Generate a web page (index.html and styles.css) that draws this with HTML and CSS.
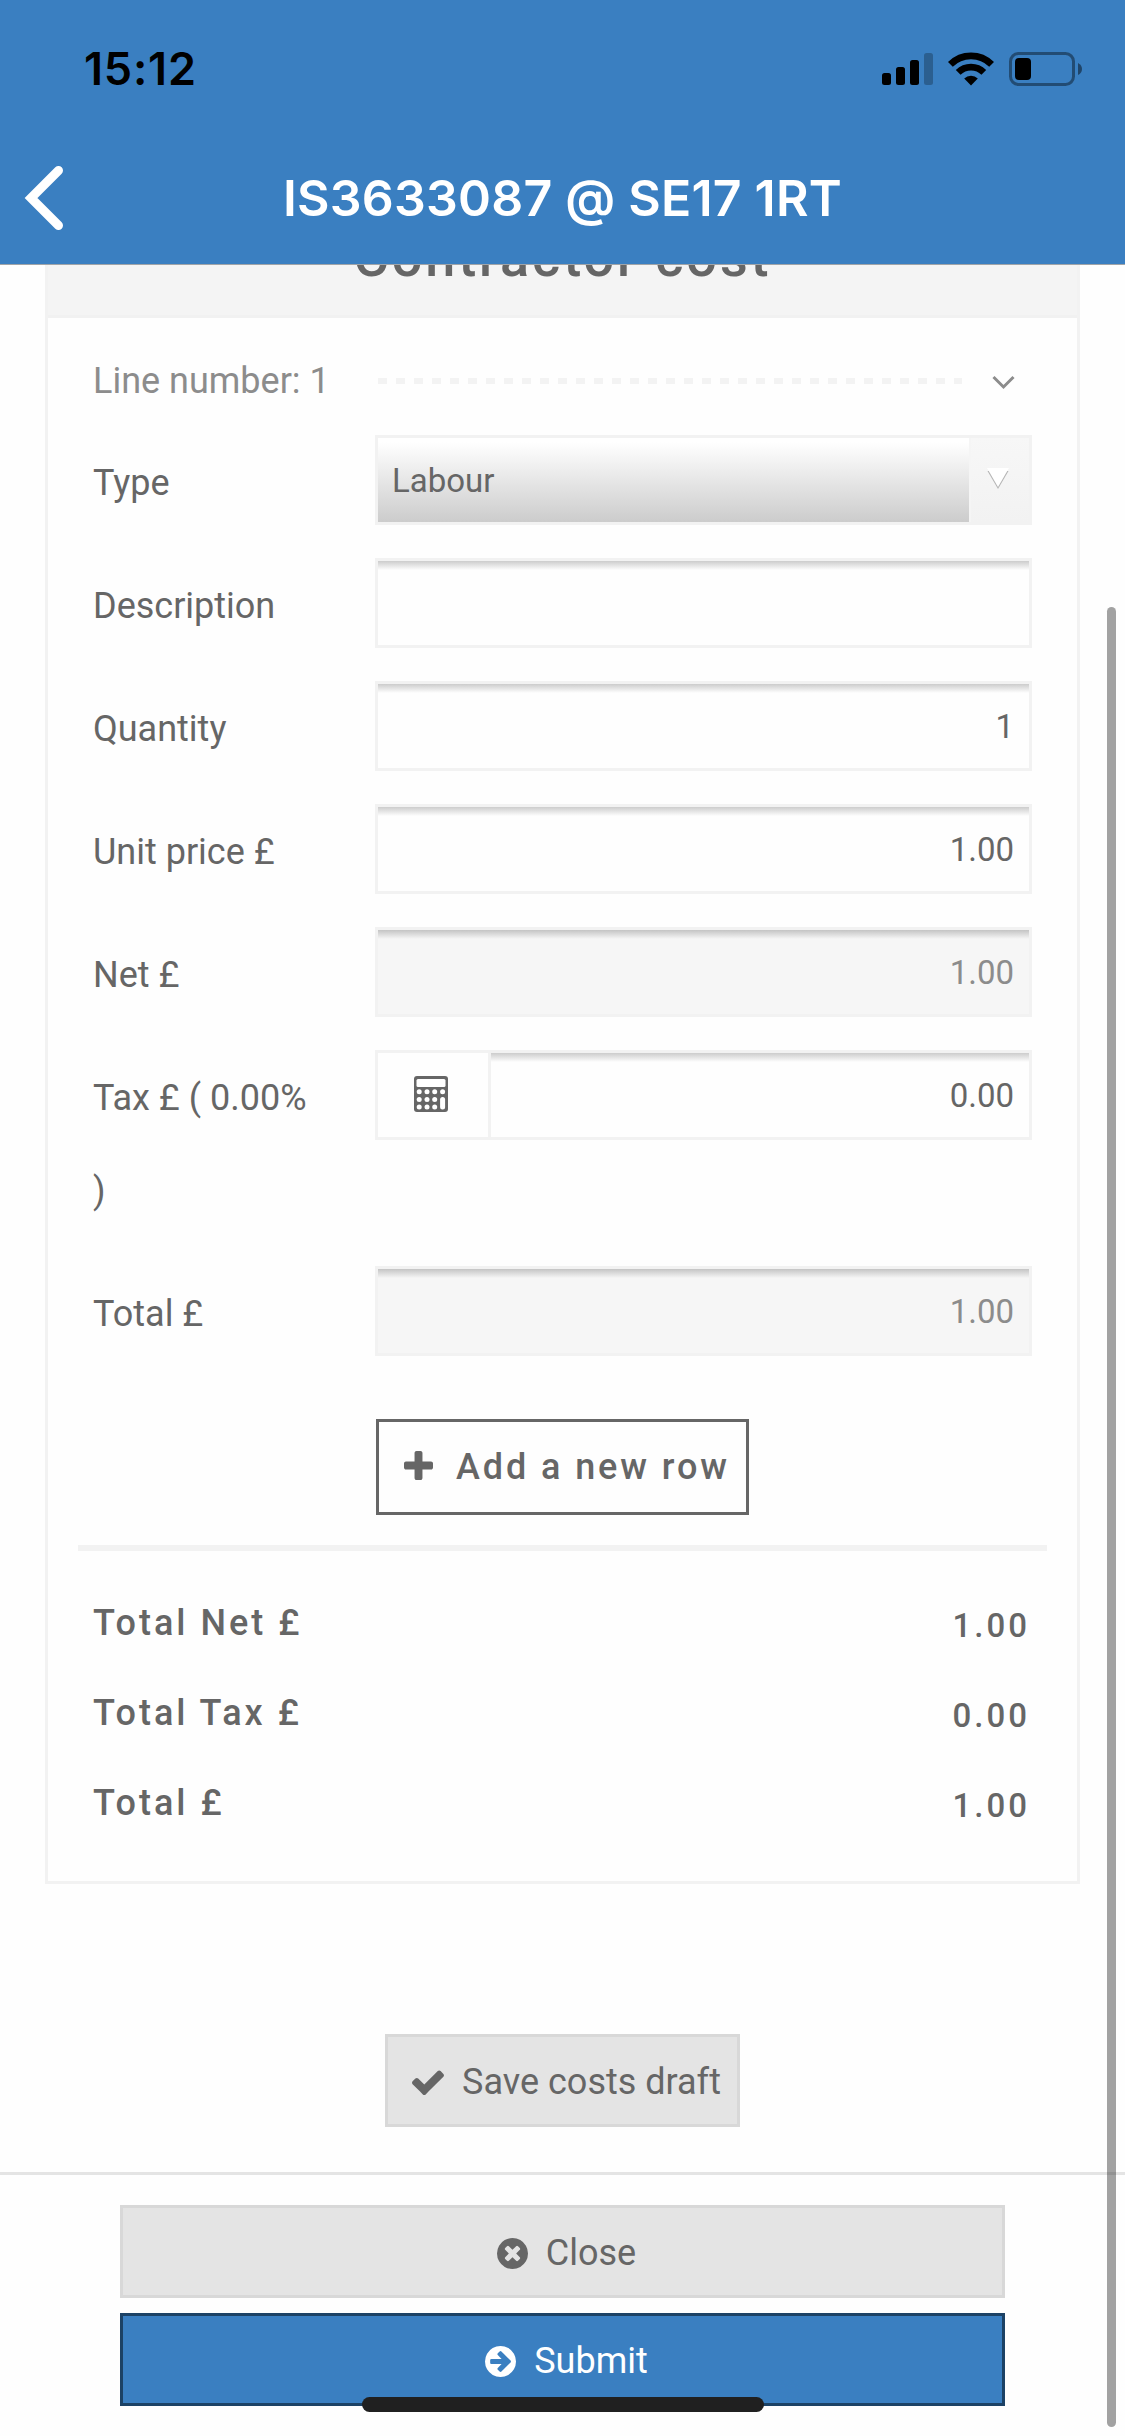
FILE: index.html
```html
<!DOCTYPE html>
<html lang="en">
<head>
    <meta charset="UTF-8">
    <meta name="viewport" content="width=device-width, initial-scale=1.0">
    <title>Contractor cost</title>
    <link rel="stylesheet" href="styles.css">
</head>
<body>

    <!-- Header -->
    <header class="header">
        <div class="status-bar">
            <span class="time">15:12</span>
            <svg class="status-icons" width="202" height="36" viewBox="0 0 202 36">
                <rect x="1" y="22" width="9" height="12" rx="2.5"/>
                <rect x="15" y="16" width="9" height="18" rx="2.5"/>
                <rect x="29" y="9" width="9" height="25" rx="2.5"/>
                <rect x="43" y="2" width="9" height="32" rx="2.5" opacity="0.25"/>
                <g fill="none" stroke="#000" stroke-width="6.8">
                    <path d="M69.4 13.3a29.2 29.2 0 0 1 41.2 0"/>
                    <path d="M77.2 21.4a18.2 18.2 0 0 1 25.6 0"/>
                </g>
                <path d="M83.2 27.6a9.8 9.8 0 0 1 13.6 0L90 34.4z"/>
                <rect x="129.5" y="2.500" width="63" height="31" rx="8" fill="none" stroke="#000" stroke-width="3" opacity="0.4"/>
                <rect x="134" y="7" width="16" height="22" rx="4"/>
                <path d="M197 12q4 2 4 6t-4 6z" opacity="0.45"/>
            </svg>
        </div>
        <div class="nav-bar">
            <svg class="back" width="45" height="66" viewBox="0 0 45 66">
                <path d="M36.500 5.500L9 33l27.500 27.500" fill="none" stroke="#fff" stroke-width="9" stroke-linecap="round"/>
            </svg>
            <h1>IS3633087 @ SE17 1RT</h1>
        </div>
    </header>

    <!-- Cost form -->
    <main class="content">
        <div class="card">
            <h2>Contractor cost</h2>
            <div class="card-body">
                <div class="line-number">
                    <span>Line number: 1</span>
                    <div class="dashes"></div>
                    <svg width="23" height="16" viewBox="0 0 23 16">
                        <path d="M1.500 2l10 10 10-10" fill="none" stroke="#8c8c8c" stroke-width="3"/>
                    </svg>
                </div>

                <div class="row">
                    <label>Type</label>
                    <div class="select">
                        <span class="value">Labour</span>
                        <span class="arrow">
                            <svg width="22" height="22" viewBox="0 0 22 22">
                                <path d="M0.500 3l10.500 18L21.500 3" fill="#b4b4b4"/>
                                <path d="M0 0h22L11 19z" fill="#fff"/>
                            </svg>
                        </span>
                    </div>
                </div>
                <div class="row">
                    <label>Description</label>
                    <div class="input"></div>
                </div>
                <div class="row">
                    <label>Quantity</label>
                    <div class="input">1</div>
                </div>
                <div class="row">
                    <label>Unit price £</label>
                    <div class="input">1.00</div>
                </div>
                <div class="row">
                    <label>Net £</label>
                    <div class="input disabled">1.00</div>
                </div>
                <div class="row">
                    <label>Tax £ ( 0.00% )</label>
                    <div class="input-group">
                        <div class="calc">
                            <svg width="34" height="36" viewBox="0 0 34 36">
                                <rect width="34" height="36" rx="3" fill="#666"/>
                                <g fill="#fff">
                                    <rect x="2.500" y="3" width="29" height="8" rx="1.500"/>
                                    <circle cx="5.200" cy="15.700" r="2.500"/>
                                    <circle cx="13" cy="15.700" r="2.500"/>
                                    <circle cx="20.700" cy="15.700" r="2.500"/>
                                    <circle cx="28.600" cy="15.700" r="2.500"/>
                                    <circle cx="5.200" cy="23.400" r="2.500"/>
                                    <circle cx="13" cy="23.400" r="2.500"/>
                                    <circle cx="20.700" cy="23.400" r="2.500"/>
                                    <circle cx="5.200" cy="31" r="2.500"/>
                                    <circle cx="13" cy="31" r="2.500"/>
                                    <circle cx="20.700" cy="31" r="2.500"/>
                                    <rect x="26.100" y="20.900" width="5" height="12.600" rx="2.500"/>
                                </g>
                            </svg>
                        </div>
                        <div class="input">0.00</div>
                    </div>
                </div>
                <div class="row">
                    <label>Total £</label>
                    <div class="input disabled">1.00</div>
                </div>

                <button class="add-row">
                    <svg width="29" height="29" viewBox="192 128 1408 1408"><path fill="currentColor" d="M1600 736v192q0 40-28 68t-68 28h-416v416q0 40-28 68t-68 28h-192q-40 0-68-28t-28-68v-416h-416q-40 0-68-28t-28-68v-192q0-40 28-68t68-28h416v-416q0-40 28-68t68-28h192q40 0 68 28t28 68v416h416q40 0 68 28t28 68z"/></svg>
                    Add a new row
                </button>

                <div class="divider"></div>

                <div class="total">
                    <span>Total Net £</span>
                    <span class="amount">1.00</span>
                </div>
                <div class="total">
                    <span>Total Tax £</span>
                    <span class="amount">0.00</span>
                </div>
                <div class="total">
                    <span>Total £</span>
                    <span class="amount">1.00</span>
                </div>
            </div>
        </div>

        <button class="btn save">
            <svg width="32" height="25" viewBox="121 310 1550 1212"><path fill="currentColor" d="M1671 566q0 40-28 68l-724 724-136 136q-28 28-68 28t-68-28l-136-136-362-362q-28-28-28-68t28-68l136-136q28-28 68-28t68 28l294 295 656-657q28-28 68-28t68 28l136 136q28 28 28 68z"/></svg>
            Save costs draft
        </button>
    </main>

    <!-- Footer buttons -->
    <footer class="footer">
        <button class="btn">
            <svg width="31" height="31" viewBox="128 128 1536 1536"><path fill="currentColor" d="M1277 1122q0-26-19-45l-181-181 181-181q19-19 19-45 0-27-19-46l-90-90q-19-19-46-19-26 0-45 19l-181 181-181-181q-19-19-45-19-27 0-46 19l-90 90q-19 19-19 46 0 26 19 45l181 181-181 181q-19 19-19 45 0 27 19 46l90 90q19 19 46 19 26 0 45-19l181-181 181 181q19 19 45 19 27 0 46-19l90-90q19-19 19-46zm387-226q0 209-103 385.500t-279.500 279.500-385.500 103-385.500-103-279.500-279.500-103-385.500 103-385.500 279.500-279.500 385.500-103 385.500 103 279.500 279.500 103 385.500z"/></svg>
            Close
        </button>
        <button class="btn submit">
            <svg width="31" height="31" viewBox="128 128 1536 1536"><path fill="currentColor" d="M1413 896q0-27-18-45l-91-91-362-362q-18-18-45-18t-45 18l-91 91q-18 18-18 45t18 45l189 189h-502q-26 0-45 19t-19 45v128q0 26 19 45t45 19h502l-189 189q-19 19-19 45t19 45l91 91q18 18 45 18t45-18l362-362 91-91q18-18 18-45zm251 0q0 209-103 385.500t-279.500 279.500-385.500 103-385.500-103-279.500-279.500-103-385.500 103-385.500 279.500-279.500 385.500-103 385.500 103 279.500 279.500 103 385.500z"/></svg>
            Submit
        </button>
    </footer>

    <div class="scrollbar"></div>
    <div class="home-indicator"></div>

</body>
</html>
```
FILE: styles.css
```css
* {
    box-sizing: border-box;
    margin: 0;
    padding: 0;
}
body {
    position: relative;
    width: 1125px;
    height: 2436px;
    overflow: hidden;
    background: #fefefe;
    font-family: Roboto, sans-serif;
    font-size: 36px;
    color: #666;
}
svg {
    display: block;
    flex: none;
}

/* Header */
.header {
    height: 265px;
    background: #3a7fc1;
    border-bottom: 1px solid #a0a4a8;
    font-family: Inter, sans-serif;
}
.status-bar {
    height: 132px;
    padding: 51px 42px 0 84px;
    display: flex;
    justify-content: space-between;
    align-items: flex-start;
}
.time {
    font-size: 45px;
    font-weight: 600;
    letter-spacing: 0.8px;
    line-height: 36px;
    color: #000;
}
.nav-bar {
    height: 132px;
    padding: 0 22px;
    display: grid;
    grid-template-columns: 45px 1fr 45px;
    align-items: center;
}
h1 {
    font-size: 50px;
    font-weight: 600;
    letter-spacing: 0.2px;
    line-height: 60px;
    color: #fff;
    text-align: center;
    white-space: nowrap;
}

/* Card */
.content {
    height: 1907px;
    padding: 0 45px;
    overflow: hidden;
}
.card {
    margin-top: -55px;
    border: 3px solid #f2f2f2;
}
h2 {
    height: 105px;
    background: #f4f4f4;
    border-bottom: 3px solid #f1f1f1;
    font-size: 54px;
    font-weight: 500;
    letter-spacing: 2.9px;
    line-height: 89px;
    text-align: center;
}
.card-body {
    padding: 16px 45px 34px;
}
.line-number {
    height: 93px;
    margin-bottom: 8px;
    display: grid;
    grid-template-columns: 285px 584px 1fr;
    align-items: center;
    color: #8c8c8c;
}
.line-number svg {
    margin: 5px 0 0 30px;
}
.dashes {
    height: 6px;
    background: repeating-linear-gradient(to right, #f3f3f3 0 9px, transparent 9px 18px);
}
.row {
    display: grid;
    grid-template-columns: 282px 1fr;
    margin-bottom: 28px;
}
label {
    padding: 2px 60px 0 0;
    line-height: 93px;
}
.input {
    height: 90px;
    padding: 1px 15px 0;
    border: 3px solid #f2f2f2;
    background: linear-gradient(#ccc, rgba(204, 204, 204, 0) 9px);
    font-size: 33px;
    line-height: 84px;
    text-align: right;
}
.disabled {
    background: linear-gradient(#c4c4c4, #f6f6f6 9px);
    color: #8c8c8c;
}
.select {
    height: 90px;
    display: flex;
    border: 3px solid #f2f2f2;
    font-size: 33px;
    line-height: 84px;
}
.select .value {
    flex: 1;
    padding: 1px 0 0 14px;
    line-height: 83px;
    background: linear-gradient(#fff 5%, #ccc);
}
.select .arrow {
    width: 60px;
    padding: 30px 0 0 16px;
    border-left: 2px solid #f5f5f5;
    background: linear-gradient(#f7f7f7, #f2f2f2);
}
.input-group {
    display: flex;
}
.input-group .input {
    flex: 1;
}
.calc {
    width: 113px;
    height: 90px;
    border: 3px solid #f2f2f2;
    border-right: none;
    display: flex;
    justify-content: center;
    padding: 23px 4px 0 0;
}
.add-row {
    width: 373px;
    height: 96px;
    margin: 58px 0 30px 283px;
    padding-left: 25px;
    display: flex;
    align-items: center;
    gap: 23px;
    border: 3px solid #666;
    background: none;
    font: 500 36px/90px Roboto, sans-serif;
    letter-spacing: 2.9px;
    color: #666;
    white-space: nowrap;
}
.add-row svg {
    margin-bottom: 3px;
}
.divider {
    height: 6px;
    margin: 0 -15px 27px;
    background: #f2f2f2;
}
.total {
    height: 90px;
    display: flex;
    justify-content: space-between;
    font-weight: 500;
    letter-spacing: 3px;
    line-height: 90px;
}
.total:last-child {
    height: 89px;
}
.amount {
    padding: 3px 2px 0 0;
    font-size: 33px;
}

/* Buttons */
.btn {
    width: 100%;
    height: 93px;
    padding: 3px 0 0 8px;
    display: flex;
    align-items: center;
    justify-content: center;
    gap: 18px;
    border: 3px solid #d8d8d8;
    background: #e4e4e4;
    font: 36px/84px Roboto, sans-serif;
    color: #666;
    white-space: nowrap;
}
.save {
    width: 355px;
    margin: 150px auto 0;
}
.submit {
    background: #3a7fc1;
    border-color: #1c4265;
    color: #fff;
}
.footer {
    height: 264px;
    padding: 30px 120px 0;
    border-top: 3px solid #e4e4e4;
    display: flex;
    flex-direction: column;
    gap: 15px;
}

/* Overlays */
.scrollbar {
    position: absolute;
    top: 607px;
    right: 9px;
    width: 9px;
    height: 1820px;
    border-radius: 5px;
    background: rgba(0, 0, 0, 0.36);
}
.home-indicator {
    position: absolute;
    top: 2397px;
    left: 362px;
    width: 402px;
    height: 15px;
    border-radius: 8px;
    background: #202020;
}
```
